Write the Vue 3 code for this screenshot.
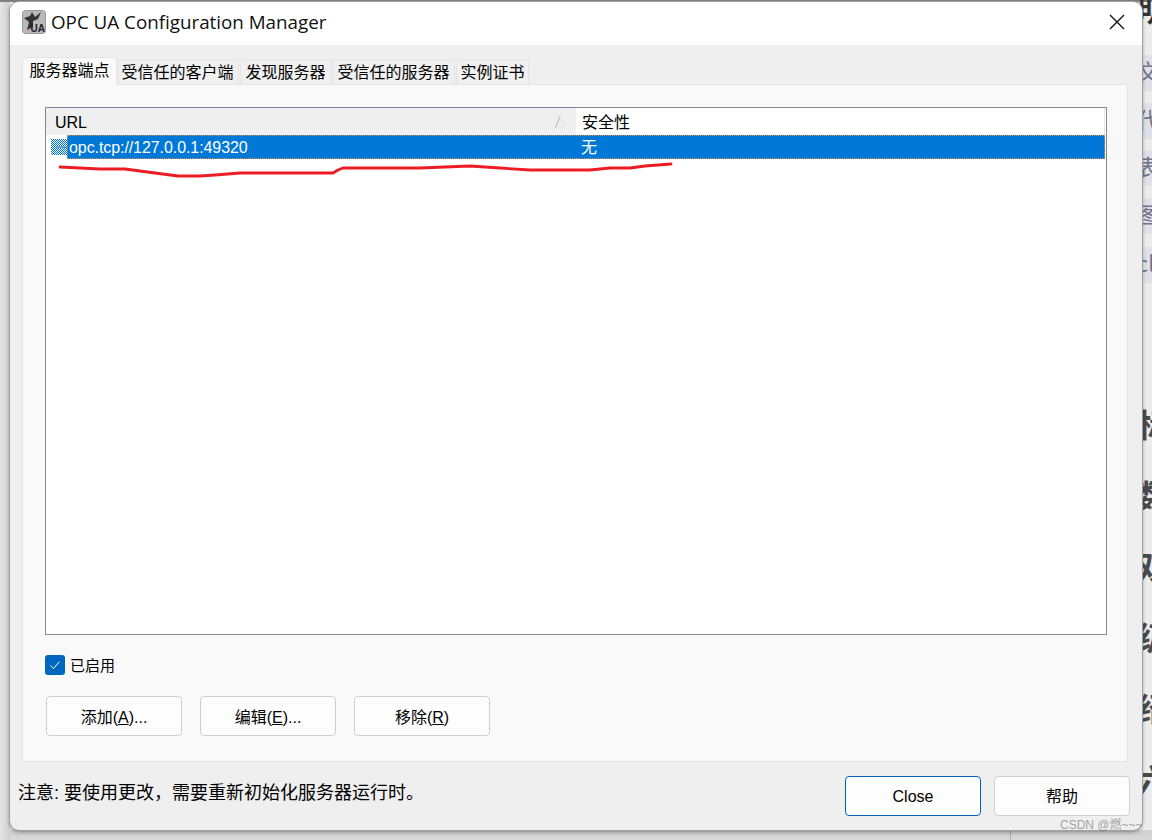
<script setup>
const tabs = [
  { label: '服务器端点', w: 95, active: true },
  { label: '受信任的客户端', w: 121, nudge: true },
  { label: '发现服务器', w: 91 },
  { label: '受信任的服务器', w: 123 },
  { label: '实例证书', w: 73 }
]
const ghostLight = [
  { t: '文', top: 55 }, { t: '代', top: 103 }, { t: '表', top: 150 }, { t: '图', top: 198 }, { t: 'cl', top: 247 }
]
const ghostDark = ['标', '数', '双', '级', '绍', '六']
const redLine = '60,167 80,168 100,169 125,169 140,171 155,173 178,176 200,176 215,175 240,173 290,173 333,173 338,170 343,168 380,168 420,168 445,167 470,166 500,168 530,170 560,170 590,170 610,168 630,168 645,166 671,164'
</script>

<template>
  <div class="desk">
    <div class="ghost">
      <span class="ghost-top">明</span>
      <span v-for="g in ghostLight" :key="g.t" class="ghost-light" :style="{ top: g.top + 'px' }">{{ g.t }}</span>
      <span v-for="(g, i) in ghostDark" :key="g" class="ghost-dark" :style="{ top: 404 + i * 71 + 'px' }">{{ g }}</span>
    </div>

    <div class="window">
      <header class="title">
        <span class="app-icon">
          <svg width="24" height="24" viewBox="0 0 24 24">
            <rect x="0.5" y="0.5" width="23" height="23" rx="3" fill="#b9b9b9" stroke="#9a9a9a" />
            <path d="M2 8 L8 6 L10 2 L13 7 L19 2 L16 9 L11 11 L11 17 L5 20 L7 12 Z" fill="#333" />
          </svg>
          <b>UA</b>
        </span>
        <span class="title-text">OPC UA Configuration Manager</span>
        <svg class="close-x" width="16" height="16" viewBox="0 0 16 16">
          <path d="M1 1 L15 15 M15 1 L1 15" stroke="#111" stroke-width="1.4" fill="none" />
        </svg>
      </header>

      <div class="content">
        <nav class="tabs">
          <div
            v-for="t in tabs"
            :key="t.label"
            class="tab"
            :class="{ active: t.active, nudge: t.nudge }"
            :style="{ width: t.w + 'px' }"
          >{{ t.label }}</div>
        </nav>

        <section class="panel">
          <div class="list">
            <div class="list-head">
              <div class="col-url">
                <span class="url-label">URL</span>
                <svg width="10" height="12" viewBox="0 0 10 12">
                  <path d="M5 0.5 L9.5 11.5 L0.5 11.5" fill="none" stroke="#e6e6e6" />
                  <path d="M5 0.5 L0.5 11.5" fill="none" stroke="#b4b4b4" />
                </svg>
              </div>
              <div class="col-sec">安全性</div>
            </div>
            <div class="list-row">
              <svg class="row-icon" width="16" height="16" viewBox="0 0 16 16" shape-rendering="crispEdges">
                <defs>
                  <pattern id="chk" width="2" height="2" patternUnits="userSpaceOnUse">
                    <rect width="2" height="2" fill="#f2f8fd" />
                    <rect width="1" height="1" fill="#0078d7" />
                    <rect x="1" y="1" width="1" height="1" fill="#0078d7" />
                  </pattern>
                </defs>
                <rect width="16" height="16" fill="url(#chk)" />
                <rect x="5" y="7" width="11" height="2" fill="#5f9fd6" />
              </svg>
              <div class="row-sel">
                <span class="cell-url">opc.tcp://127.0.0.1:49320</span>
                <span class="cell-sec">无</span>
              </div>
            </div>
          </div>

          <label class="check">
            <span class="box">
              <svg width="12" height="10" viewBox="0 0 12 10">
                <path d="M1.5 5.5 L4.5 8.5 L10.5 1.5" fill="none" stroke="#fff" stroke-width="1" />
              </svg>
            </span>
            <span class="check-label">已启用</span>
          </label>

          <div class="actions">
            <button class="btn">添加(<u>A</u>)...</button>
            <button class="btn">编辑(<u>E</u>)...</button>
            <button class="btn">移除(<u>R</u>)</button>
          </div>
        </section>

        <footer class="foot">
          <p class="note">注意: 要使用更改，需要重新初始化服务器运行时。</p>
          <button class="btn primary">Close</button>
          <button class="btn help">帮助</button>
        </footer>
      </div>
    </div>

    <svg class="scribble" width="1152" height="840" viewBox="0 0 1152 840">
      <polyline :points="redLine" fill="none" stroke="#ed1c24" stroke-width="2.8" stroke-linecap="round" stroke-linejoin="round" />
    </svg>
    <span class="watermark">CSDN @燃~~~</span>
  </div>
</template>

<style>
html, body { margin: 0; background: #dcdcdc; }
</style>

<style scoped>
.desk {
  position: relative;
  width: 1152px;
  height: 840px;
  overflow: hidden;
  padding: 2px 10px 10px;
  box-sizing: border-box;
  background:
    linear-gradient(#808080, #808080) 0 0 / 100% 2px no-repeat,
    linear-gradient(#aeaeae, #aeaeae) 1010px 100% / 1px 10px no-repeat,
    linear-gradient(90deg, #e4e4e4, #d0d0d0) 0 0 / 10px 100% no-repeat,
    linear-gradient(#d0d0d0, #d8d8d8) 0 100% / 100% 10px no-repeat,
    #ececec;
  font-family: "Liberation Sans", "Noto Sans CJK SC", sans-serif;
  color: #000;
}
.ghost { position: absolute; inset: 0; }
.ghost-top, .ghost-light, .ghost-dark {
  position: absolute;
  font-family: "Noto Sans CJK SC", sans-serif;
  white-space: nowrap;
}
.ghost-top { left: 1138px; top: -14px; font-size: 30px; font-weight: 700; color: #333; }
.ghost-light {
  left: 1130px;
  width: 22px;
  height: 36px;
  padding-left: 7px;
  box-sizing: border-box;
  line-height: 30px;
  font-size: 22px;
  color: #70738a;
  background: #dfe1e8;
  overflow: hidden;
}
.ghost-dark { left: 1137px; font-size: 32px; line-height: 38px; font-weight: 700; color: #4a4a4a; }

.window {
  position: relative;
  width: 1132px;
  height: 828px;
  display: flex;
  flex-direction: column;
  border-radius: 9px;
  overflow: hidden;
  background: #efefef;
  box-shadow: 0 0 0 1px #a0a0a0, 0 2px 4px rgba(0, 0, 0, .4);
}
.title {
  height: 43px;
  flex: none;
  box-sizing: border-box;
  display: flex;
  align-items: center;
  background: #fff;
  padding: 0 17px 4px 12px;
}
.app-icon {
  position: relative;
  width: 24px;
  height: 24px;
  flex: none;
}
.app-icon svg { display: block; }
.app-icon b {
  position: absolute;
  right: 1px;
  bottom: 0;
  font-size: 10px;
  line-height: 11px;
  color: #222;
}
.title-text {
  margin-left: 5px;
  font-family: "Open Sans", sans-serif;
  font-size: 18.8px;
  color: #111;
  flex: 1;
}
.content {
  flex: 1;
  display: flex;
  flex-direction: column;
  padding: 12px 14px 0 12px;
  min-height: 0;
}
.tabs { display: flex; gap: 1px; height: 27px; align-items: flex-end; position: relative; z-index: 1; flex: none; }
.tab {
  height: 24px;
  box-sizing: border-box;
  border: 1px solid #e4e4e4;
  border-bottom: 0;
  background: #f0f0f0;
  font-size: 16px;
  line-height: 24px;
  text-align: center;
  white-space: nowrap;
}
.tab.nudge { padding-right: 2px; }
.tab.active {
  height: 28px;
  margin-bottom: -1px;
  background: #f9f9f9;
  line-height: 26px;
}
.panel {
  height: 678px;
  flex: none;
  box-sizing: border-box;
  border: 1px solid #e5e5e5;
  background: #f9f9f9;
  padding: 22px 20px 0 22px;
}
.list {
  height: 528px;
  box-sizing: border-box;
  border: 1px solid #85858f;
  background: #fff;
}
.list-head { display: flex; height: 27px; }
.col-url {
  width: 530px;
  box-sizing: border-box;
  background: #efefef;
  padding: 0 11px 0 9px;
  display: flex;
  justify-content: space-between;
  align-items: center;
  font-size: 16px;
}
.url-label { padding-top: 2px; }
.col-sec {
  flex: 1;
  margin-right: 1px;
  padding-left: 6px;
  border-right: 1px solid #e5e5e5;
  font-size: 16px;
  line-height: 29px;
}
.list-row { display: flex; height: 24px; padding-left: 5px; align-items: center; }
.row-icon { flex: none; display: block; }
.row-sel {
  flex: 1;
  height: 24px;
  margin-right: 1px;
  box-sizing: border-box;
  display: flex;
  align-items: center;
  background: #0078d7;
  border: 1px dotted #d98f45;
  color: #fff;
  font-size: 16px;
}
.cell-url { width: 513px; padding: 2px 0 0 1px; box-sizing: border-box; letter-spacing: -0.08px; }
.cell-sec { flex: 1; padding-bottom: 2px; }

.check {
  display: flex;
  align-items: center;
  height: 20px;
  margin-top: 20px;
  font-size: 15px;
}
.check-label { padding-bottom: 2px; }
.box {
  width: 20px;
  height: 20px;
  margin-right: 5px;
  border-radius: 3px;
  background: #0067c0;
  display: flex;
  align-items: center;
  justify-content: center;
}
.actions { display: flex; gap: 18px; margin-top: 21px; padding-left: 1px; }
.btn {
  width: 136px;
  height: 40px;
  flex: none;
  box-sizing: border-box;
  border: 1px solid #d0d0d0;
  border-radius: 4px;
  background: #fdfdfd;
  font: 16px "Liberation Sans", "Noto Sans CJK SC", sans-serif;
  color: #000;
  padding: 0;
}
.btn.primary { border: 1px solid #0067c0; padding-top: 2px; }
.btn.help { padding-bottom: 2px; }
.foot {
  flex: 1;
  display: flex;
  align-items: flex-start;
  gap: 13px;
  padding-top: 14px;
  margin-left: -4px;
  margin-right: -2px;
}
.note {
  flex: 1;
  margin: 0;
  padding-top: 4px;
  font-size: 18px;
  line-height: 26px;
  white-space: nowrap;
}
.scribble { position: absolute; left: 0; top: 0; pointer-events: none; }
.watermark {
  position: absolute;
  left: 1060px;
  top: 817px;
  font-size: 12px;
  line-height: 16px;
  color: rgba(90, 90, 90, .55);
  white-space: nowrap;
}
</style>
